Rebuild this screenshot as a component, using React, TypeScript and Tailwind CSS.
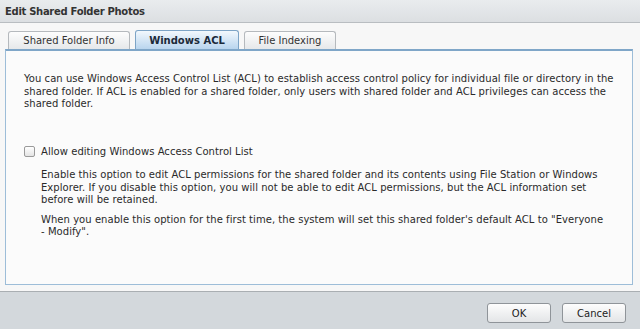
import React from 'react';

const tabs = [
  { label: 'Shared Folder Info', width: 'w-[122px]' },
  { label: 'Windows ACL', width: 'w-[104px]', active: true },
  { label: 'File Indexing', width: 'w-[92px]' },
];

export default function App() {
  return (
    <div className="w-[640px] h-[329px] flex flex-col bg-[#f7f7f7] text-[#222] font-['DejaVu_Sans',sans-serif] text-[10px] overflow-hidden">
      {/* Title bar */}
      <div className="h-[23px] flex items-center px-[5px] bg-gradient-to-b from-[#e9ecee] to-[#dcdfe2] border-b border-[#b9bdc1]">
        <span className="font-bold text-[10px] tracking-[-0.3px] text-[#333]">Edit Shared Folder Photos</span>
      </div>

      {/* Tabs */}
      <div className="flex gap-[5px] pl-[8px] pt-[7px] h-[26px] items-end">
        {tabs.map((t) =>
          t.active ? (
            <div
              key={t.label}
              className={`${t.width} h-[19px] flex items-center justify-center rounded-t-[3px] border border-b-0 border-[#7da4c6] bg-gradient-to-b from-[#f2f8fd] to-[#b9d5ee] font-bold text-[#1b2a3a]`}
            >
              {t.label}
            </div>
          ) : (
            <div
              key={t.label}
              className={`${t.width} h-[18px] flex items-center justify-center rounded-t-[3px] border border-b-0 border-[#b5b9bd] bg-gradient-to-b from-[#fdfdfd] to-[#e6e8ea] text-[#333]`}
            >
              {t.label}
            </div>
          )
        )}
      </div>

      {/* Panel */}
      <div className="ml-[5px] mr-[7px] h-[236px] border border-[#9dbdd8] border-t-2 border-t-[#7fa6c8] bg-[#fbfbfb] pl-[18px] pr-[8px] pt-[22px] leading-[12.5px] tracking-[0.05px] text-[#2a2a2a] whitespace-nowrap">
        <p>
          You can use Windows Access Control List (ACL) to establish access control policy for individual file or directory in the
          <br />
          shared folder. If ACL is enabled for a shared folder, only users with shared folder and ACL privileges can access the
          <br />
          shared folder.
        </p>

        <label className="flex items-center gap-[6px] mt-[35px]">
          <span className="w-[11px] h-[11px] rounded-[2px] border border-[#9a9a9a] bg-gradient-to-b from-white to-[#e4e4e4]" />
          <span>Allow editing Windows Access Control List</span>
        </label>

        <div className="pl-[17px] mt-[11px]">
          <p>
            Enable this option to edit ACL permissions for the shared folder and its contents using File Station or Windows
            <br />
            Explorer. If you disable this option, you will not be able to edit ACL permissions, but the ACL information set
            <br />
            before will be retained.
          </p>
          <p className="mt-[7px]">
            When you enable this option for the first time, the system will set this shared folder's default ACL to "Everyone
            <br />
            - Modify".
          </p>
        </div>
      </div>

      {/* Footer */}
      <div className="mt-[6px] flex-1 border-t border-[#a9aeb2] bg-[#d3d8dc] flex items-start justify-end gap-[11px] pr-[14px] pt-[11px]">
        <button className="w-[64px] h-[20px] rounded-[3px] border border-[#8f9499] bg-gradient-to-b from-[#fdfdfd] to-[#e3e5e7] text-[10px] text-[#222]">
          OK
        </button>
        <button className="w-[64px] h-[20px] rounded-[3px] border border-[#8f9499] bg-gradient-to-b from-[#fdfdfd] to-[#e3e5e7] text-[10px] text-[#222]">
          Cancel
        </button>
      </div>
    </div>
  );
}
